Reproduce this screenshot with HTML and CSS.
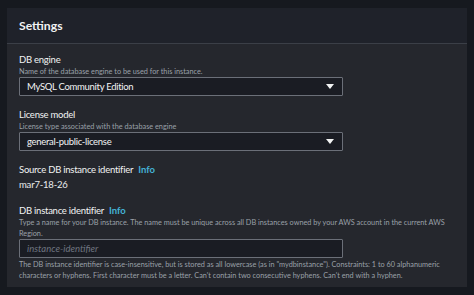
FILE: index.html
```html
<!DOCTYPE html>
<html>
<head>
  <title>Settings</title>
  <link rel="stylesheet" href="styles.css">
</head>
<body>
  <div class="panel">
    <div class="panel-header">Settings</div>
    <div class="panel-body">
      <div class="field">
        <div class="field-label">DB engine</div>
        <div class="description">Name of the database engine to be used for this instance.</div>
        <div class="select">
          <span>MySQL Community Edition</span>
          <span class="caret"></span>
        </div>
      </div>

      <div class="field">
        <div class="field-label">License model</div>
        <div class="description">License type associated with the database engine</div>
        <div class="select">
          <span>general-public-license</span>
          <span class="caret"></span>
        </div>
      </div>

      <div class="field">
        <div class="field-label">Source DB instance identifier <a class="info">Info</a></div>
        <div class="value">mar7-18-26</div>
      </div>

      <div class="field last">
        <div class="field-label">DB instance identifier <a class="info">Info</a></div>
        <div class="description">Type a name for your DB instance. The name must be unique across all DB instances owned by your AWS account in the current AWS Region.</div>
        <input class="text-input" type="text" placeholder="instance-identifier">
        <div class="constraint">The DB instance identifier is case-insensitive, but is stored as all lowercase (as in "mydbinstance"). Constraints: 1 to 60 alphanumeric characters or hyphens. First character must be a letter. Can't contain two consecutive hyphens. Can't end with a hyphen.</div>
      </div>
    </div>
  </div>
</body>
</html>
```

FILE: styles.css
```css
body {
  margin: 0;
  padding: 8px 7px 0 7px;
  background: #16191f;
  font-family: Lato, "Open Sans", Arial, sans-serif;
  color: #e9ebed;
  width: 474px;
  height: 295px;
  box-sizing: border-box;
  overflow: hidden;
}

.panel {
  width: 460px;
  height: 279px;
  background: #25272d;
  box-sizing: border-box;
}

.panel-header {
  height: 36px;
  background: #1f222a;
  border-bottom: 1px solid #3b3f47;
  box-sizing: border-box;
  padding: 0 12px;
  display: flex;
  align-items: center;
  font-size: 12.2px;
  font-weight: bold;
  color: #f2f3f3;
}

.panel-body {
  padding: 9px 12px 0 12px;
}

.field {
  margin-bottom: 12px;
}

.field.last {
  margin-bottom: 0;
}

.field-label {
  font-size: 9.5px;
  line-height: 13px;
  letter-spacing: -0.25px;
  color: #f2f3f3;
}

.info {
  color: #44b2d6;
  font-weight: bold;
  letter-spacing: 0;
  margin-left: 3px;
}

.description,
.constraint {
  font-size: 7.3px;
  line-height: 11px;
  color: #9aa0a8;
}

.constraint {
  margin-top: 1px;
}

.select {
  width: 324px;
  height: 19px;
  box-sizing: border-box;
  background: #1a1c23;
  border: 1px solid #6b6f78;
  border-radius: 1px;
  display: flex;
  align-items: center;
  justify-content: space-between;
  padding: 0 8px 0 7px;
  font-size: 9.5px;
  letter-spacing: -0.3px;
  color: #f2f3f3;
}

.caret {
  width: 0;
  height: 0;
  border-left: 4px solid transparent;
  border-right: 4px solid transparent;
  border-top: 5px solid #f2f3f3;
}

.value {
  font-size: 9.5px;
  line-height: 14px;
  letter-spacing: -0.2px;
  margin-top: 2px;
  color: #e9ebed;
}

.text-input {
  display: block;
  margin-top: 0;
  width: 324px;
  height: 19px;
  box-sizing: border-box;
  background: #1a1c23;
  border: 1px solid #6b6f78;
  border-radius: 1px;
  padding: 0 7px;
  font-family: Lato, "Open Sans", Arial, sans-serif;
  font-size: 9.5px;
  color: #f2f3f3;
  outline: none;
}

.text-input::placeholder {
  color: #6f7580;
  font-style: italic;
}
```
